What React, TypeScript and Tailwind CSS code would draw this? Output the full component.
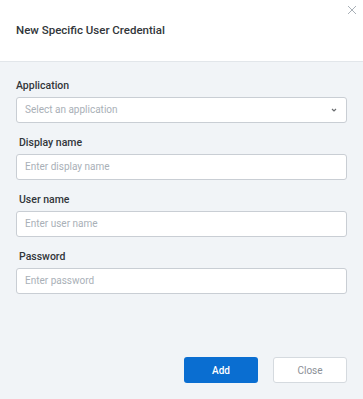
import React from "react";

const Field: React.FC<{ label: string; placeholder: string; type?: string; indent?: boolean }> = ({
    label,
    placeholder,
    type = "text",
    indent = true,
}) => (
    <div>
        <label className={`block text-[10.5px] font-medium text-[#32363a] leading-none mb-[5px] ${indent ? "pl-[3px]" : ""}`}>
            {label}
        </label>
        <input
            type={type}
            placeholder={placeholder}
            className="w-full h-[26px] rounded-[3px] border border-[#c9ced4] bg-white px-[8px] text-[10px] text-[#32363a] placeholder:text-[#a9b0b7] outline-none"
        />
    </div>
);

export default function App() {
    return (
        <div className="w-[363px] h-[399px] bg-[#f1f4f7] flex flex-col" style={{ fontFamily: "Roboto, 'Liberation Sans', sans-serif" }}>
            {/* Header */}
            <header className="relative h-[62px] bg-white border-b border-[#e2e6ea] flex items-center px-[16px]">
                <h1 className="text-[11.5px] font-medium text-[#32363a]">New Specific User Credential</h1>
                <button className="absolute right-[5px] top-[4px] text-[#a9b0b7]">
                    <svg width="12" height="12" viewBox="0 0 12 12" fill="none" stroke="currentColor" strokeWidth="1">
                        <path d="M2 2l8 8M10 2l-8 8" />
                    </svg>
                </button>
            </header>

            {/* Body */}
            <div className="flex-1 flex flex-col px-[16px] pt-[19px] pb-[16px]">
                <div className="flex flex-col gap-[15px]">
                    <div>
                        <label className="block text-[10.5px] font-medium text-[#32363a] leading-none mb-[5px]">Application</label>
                        <div className="w-full h-[26px] rounded-[3px] border border-[#c9ced4] bg-white px-[8px] flex items-center justify-between">
                            <span className="text-[10px] text-[#a9b0b7]">Select an application</span>
                            <svg width="8" height="8" viewBox="0 0 8 8" fill="none" stroke="#6a6d70" strokeWidth="1.2">
                                <path d="M2 3l2 2 2-2" />
                            </svg>
                        </div>
                    </div>
                    <Field label="Display name" placeholder="Enter display name" />
                    <Field label="User name" placeholder="Enter user name" />
                    <Field label="Password" placeholder="Enter password" type="password" />
                </div>

                {/* Footer */}
                <div className="mt-auto flex justify-end gap-[15px]">
                    <button className="w-[74px] h-[26px] rounded-[3px] bg-[#0a6ed1] text-white text-[10px] font-medium">Add</button>
                    <button className="w-[74px] h-[26px] rounded-[3px] bg-white border border-[#d5dadf] text-[#8b9096] text-[10px]">Close</button>
                </div>
            </div>
        </div>
    );
}
